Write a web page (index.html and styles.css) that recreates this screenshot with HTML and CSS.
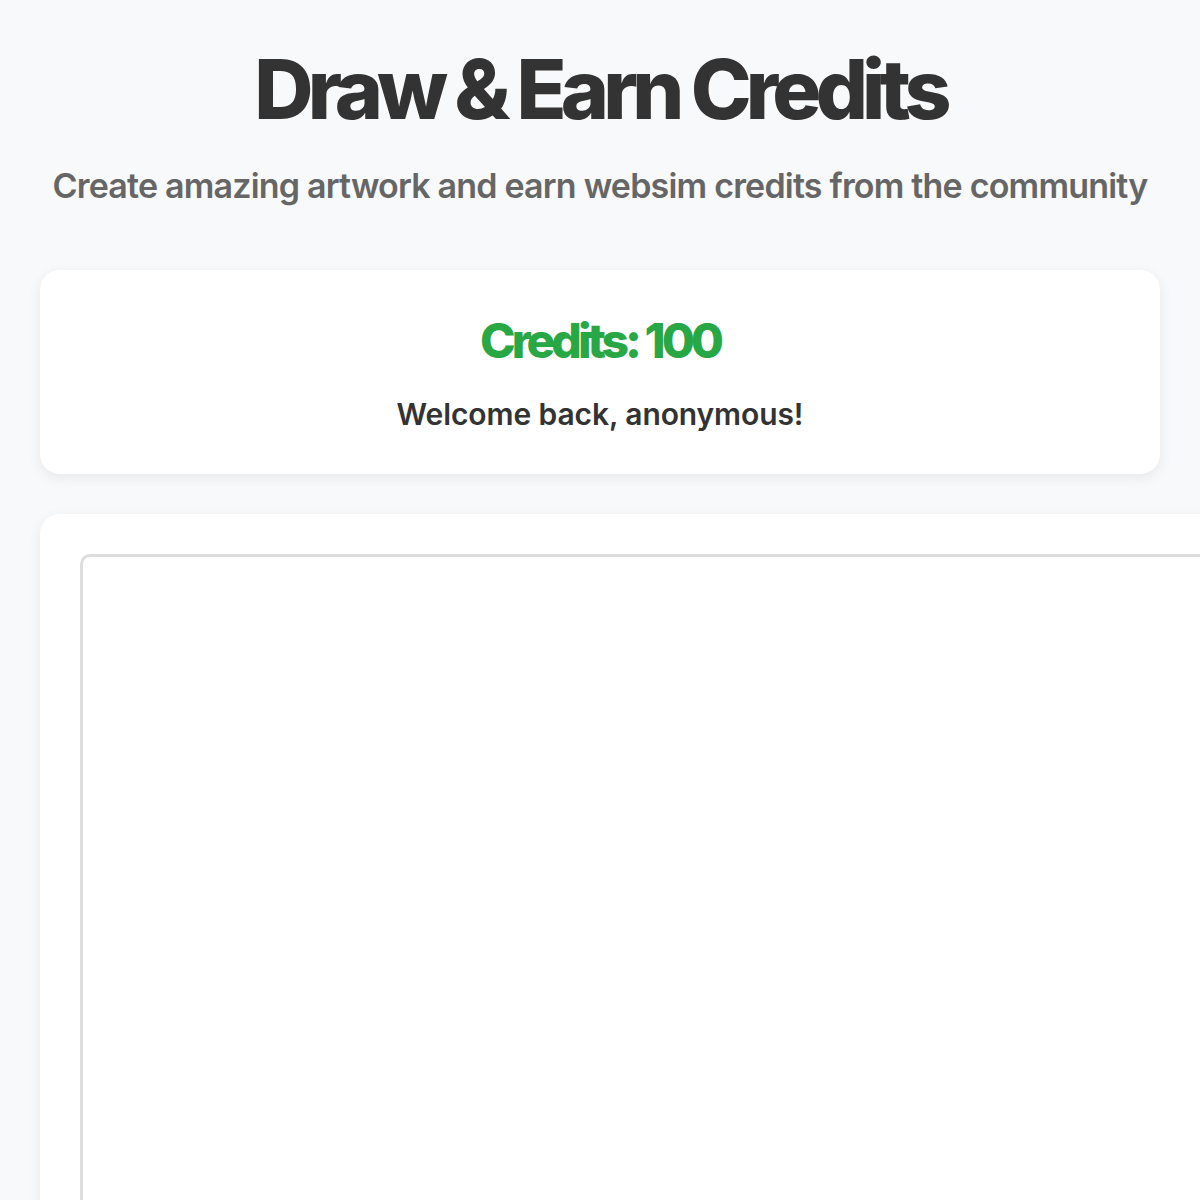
FILE: index.html
```html
<!DOCTYPE html>
<html lang="en">
<head>
<meta charset="utf-8">
<title>Draw & Earn Credits</title>
<link rel="stylesheet" href="styles.css">
</head>
<body>
<div class="container">
  <header class="header">
    <h1 class="title">Draw &amp; Earn Credits</h1>
    <p class="subtitle">Create amazing artwork and earn websim credits from the community</p>
  </header>
  <section class="card credits-card">
    <div class="credits">Credits: 100</div>
    <div class="welcome">Welcome back, anonymous!</div>
  </section>
  <section class="card canvas-card">
    <div class="canvas"></div>
  </section>
</div>
</body>
</html>
```
FILE: styles.css
```css
* { box-sizing: border-box; }
html, body { margin: 0; padding: 0; }
body {
  background: #f8f9fa;
  font-family: Inter, "Noto Sans", sans-serif;
  color: #333;
  overflow: hidden;
}
.container {
  width: 1200px;
  padding: 0 40px;
}
.header {
  text-align: center;
  padding-top: 48px;
}
.title {
  margin: 0;
  font-size: 82px;
  font-weight: 800;
  letter-spacing: -5.8px;
  line-height: 84px;
  color: #333;
}
.subtitle {
  margin: 34px 0 0;
  font-size: 34px;
  font-weight: 600;
  letter-spacing: -0.8px;
  line-height: 40px;
  color: #666;
}
.card {
  background: #fff;
  border-radius: 20px;
  box-shadow: 0 4px 14px rgba(0,0,0,0.07);
}
.credits-card {
  margin-top: 64px;
  padding: 43px 20px 42px;
  text-align: center;
}
.credits {
  font-size: 48px;
  font-weight: 800;
  letter-spacing: -4px;
  line-height: 56px;
  color: #28a745;
}
.welcome {
  margin-top: 27px;
  font-size: 30px;
  font-weight: 600;
  letter-spacing: -0.1px;
  line-height: 36px;
  color: #333;
}
.canvas-card {
  margin-top: 40px;
  width: 1400px;
  padding: 40px;
}
.canvas {
  width: 1300px;
  height: 800px;
  border: 3px solid #ddd;
  border-radius: 10px;
  background: #fff;
}
```
